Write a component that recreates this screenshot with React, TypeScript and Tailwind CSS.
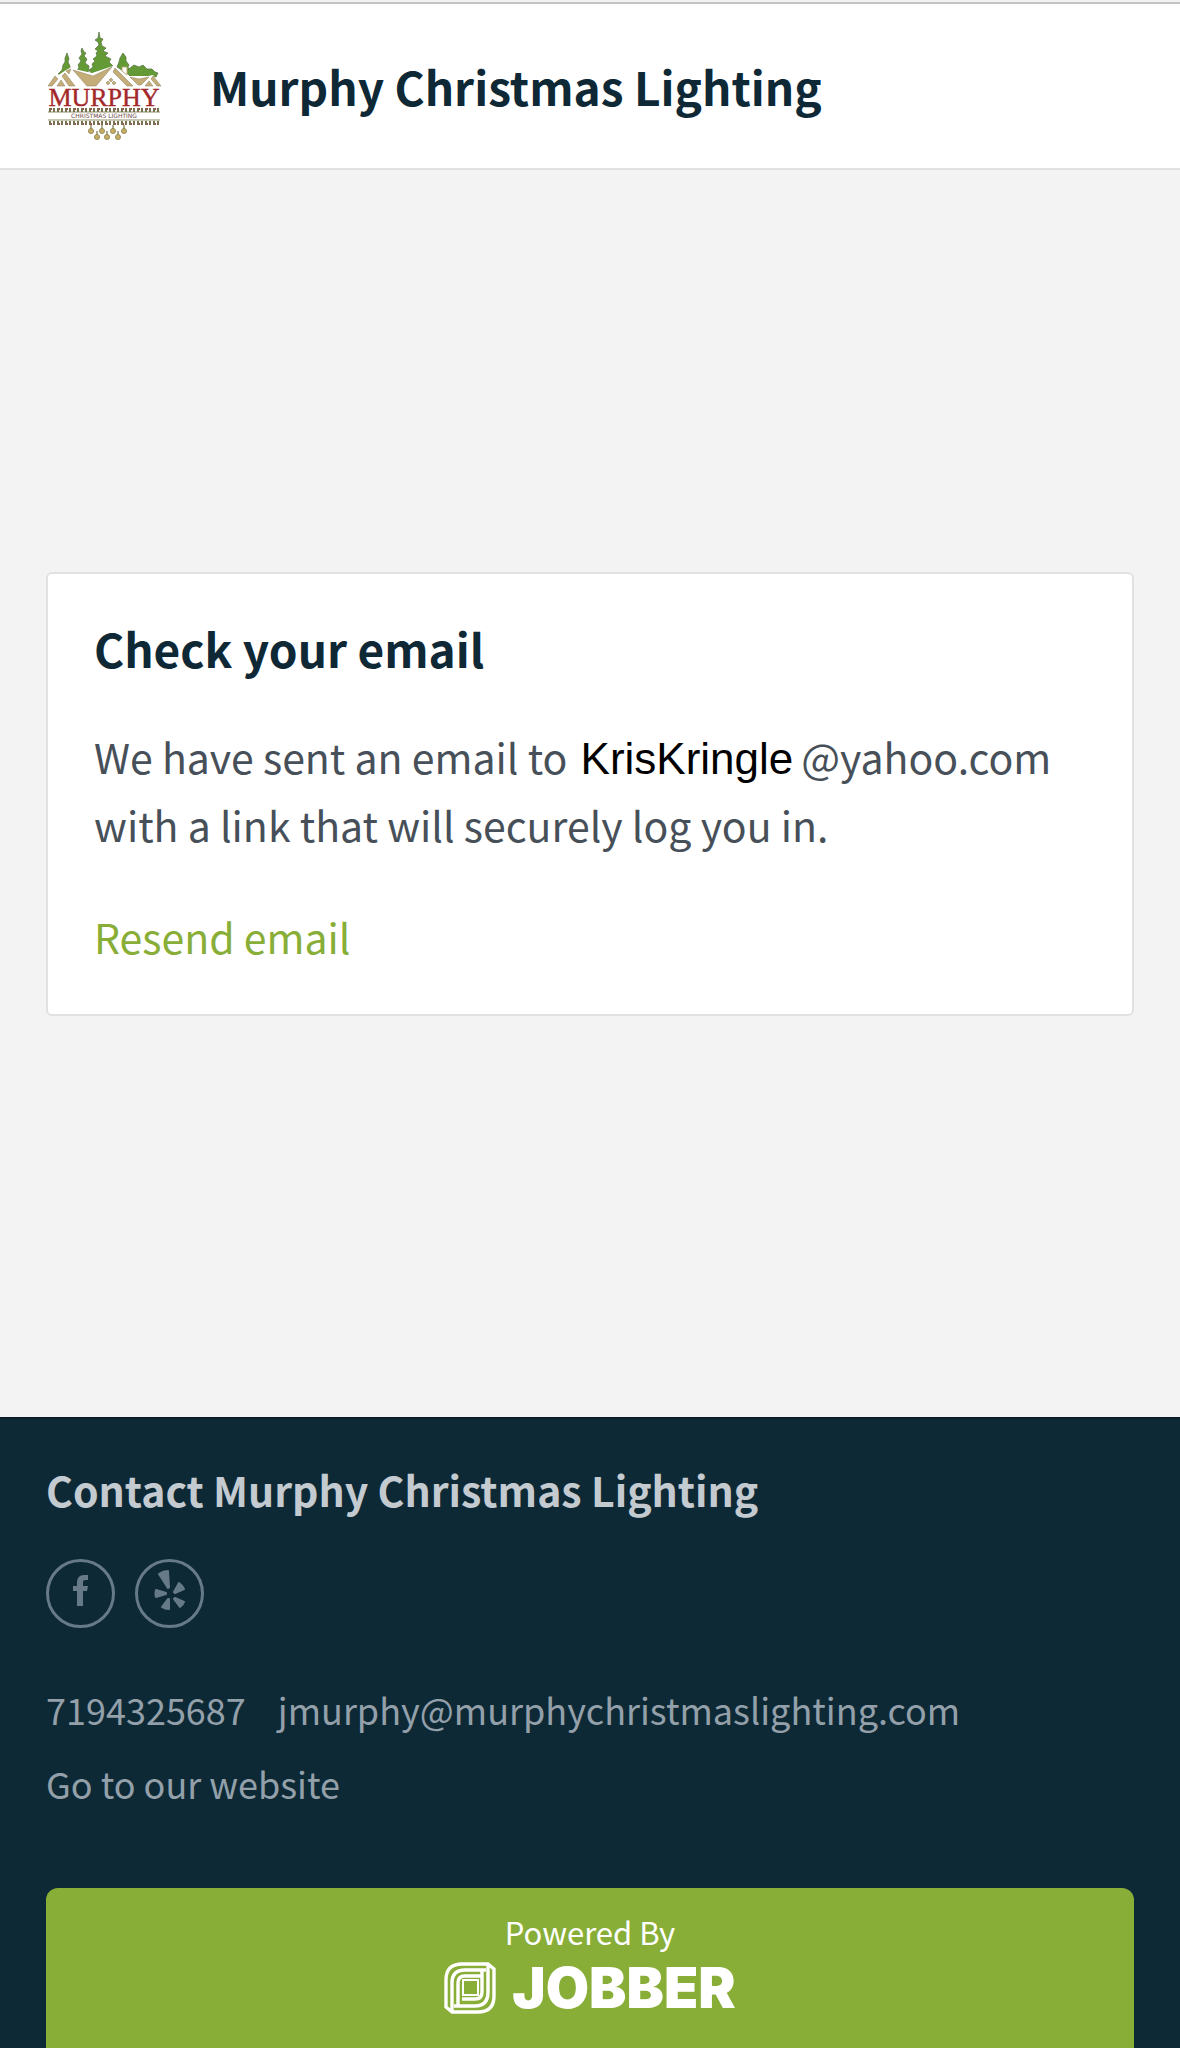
const company = {
  name: "Murphy Christmas Lighting",
  phone: "7194325687",
  email: "jmurphy@murphychristmaslighting.com",
};

const bulbs = [
  { x: 45, y: 100 },
  { x: 56, y: 100 },
  { x: 67, y: 100 },
  { x: 78, y: 100 },
  { x: 51, y: 106 },
  { x: 61, y: 106 },
  { x: 72, y: 106 },
];

function MurphyLogo() {
  return (
    <svg viewBox="0 0 116 110" className="h-[110px] w-[116px] shrink-0" role="img" aria-label="Murphy Christmas Lighting logo">
      {/* Trees */}
      <g fill="#649a35" stroke="#55703f" strokeWidth="0.7">
        <path d="M53 1l1 6 3 1-2 3 1 4 4 2-3 3 5 2-3 3 6 3-2 3 4 4-2 1 2 4-10 4-12-2-2-3 4-3-1-3 3-3-2-2 4-3-1-3 2-2-3-2 4-4-1-3-3-2 3-2z" />
        <path d="M36 17l2 4 2 1-2 3 3 3-2 4 4 3-1 8-11-3 2-4-1-2 3-4-2-3 3-4-1-3z" />
        <path d="M21 22l2 6-1 3 2 4-1 5-6 4-5-1 4-4 1-5 2-3 0-4z" />
        <path d="M77 22l3 4 0 4 3 4-1 2 2 4-7 0-6-4 2-5 1-4z" />
        <path d="M84 37l4-3 5 2 4-2 4 4 5 0 3 3 3 1-2 4-7-1-17 2-6-6z" />
      </g>
      {/* Roofs */}
      <path d="M2 56l9-11 9-6 4-2 22 5 21-7 16 10 19 0 5-1 9 12z" fill="#fff" />
      <path d="M76 36h5v8l-5-4z" fill="#fff" stroke="#bda873" strokeWidth="1" />
      <g fill="#c4ad78" stroke="#8b7c57" strokeWidth="0.5">
        <path d="M27 39l20 6 19-9-16 19h-9z" />
        <path d="M69 37l18 18h-6L67 41z" />
        <path d="M19 42l10 13h-6l-7-10z" />
        <path d="M20 40l5-2-2 5z" />
        <path d="M9 45l3 3-6 7H2z" />
        <path d="M84 46l9 2 10-2-8 8h-3z" />
        <path d="M107 45l8 10h-4l-6-7z" />
        <path d="M15 49l4 6h-8zM65 47l2 2-2 2-2-2zM62 50l2 2-2 2-2-2zM68 50l2 2-2 2-2-2zM103 50l4 5h-8z" />
      </g>
      <text x="58" y="75" textAnchor="middle" fontSize="26" fill="#a3282a" stroke="#a3282a" strokeWidth="0.4" className="font-['Liberation_Serif',serif]">
        MURPHY
      </text>
      {/* Strings of lights */}
      <g fill="none">
        <path d="M2 81h112M2 89h112" stroke="#8f8d66" strokeWidth="1" />
        <path d="M3 79h110M3 92h110" stroke="#77714f" strokeWidth="4" strokeDasharray="2 2" />
        <path d="M5 78h108M5 93h108" stroke="#a3483a" strokeWidth="2" strokeDasharray="1 7" />
      </g>
      <text x="58" y="87" textAnchor="middle" fontSize="6" fill="#6d4a48" className="font-['DejaVu_Sans',sans-serif]">
        CHRISTMAS LIGHTING
      </text>
      {bulbs.map((bulb) => (
        <g key={`${bulb.x}-${bulb.y}`}>
          <path d={`M${bulb.x} ${bulb.y - 6}v4`} stroke="#77704c" strokeWidth="1.2" />
          <circle cx={bulb.x} cy={bulb.y} r="2.6" fill="#c4ae66" stroke="#8a7b45" strokeWidth="0.7" />
        </g>
      ))}
    </svg>
  );
}

function FacebookIcon() {
  return (
    <svg viewBox="0 0 16 31" className="h-[31px] w-4" fill="currentColor" aria-hidden="true">
      <path d="M4 31V16H0v-5h4V8Q4 0 11 0h4v5h-3Q10 5 10 7v4h5l-1 5h-4v15z" />
    </svg>
  );
}

function YelpIcon() {
  return (
    <svg viewBox="0 0 32 41" className="h-[41px] w-8" fill="currentColor" stroke="currentColor" strokeWidth="2" strokeLinejoin="round" aria-hidden="true">
      <path d="M5 4Q9 1 14 1l1 16-1 1z" />
      <path d="M2 20q-1 4 0 7l10-3v-1z" />
      <path d="M15 29v10q-4 0-7-2l6-8z" />
      <path d="M21 28l9 4q-1 3-4 5l-6-8z" />
      <path d="M25 13q3 2 5 6l-9 4-1-1z" />
    </svg>
  );
}

function JobberMark() {
  return (
    <svg viewBox="0 0 52 52" className="size-[52px]" fill="none" stroke="#fff" strokeWidth="3.4" aria-hidden="true">
      <path d="M8 50L2 45V18Q2 2 18 2h26l6 5v27Q50 50 34 50H8z" />
      <path d="M8 49V21Q8 8 21 8h21" />
      <path d="M44 3v27Q44 44 31 44H10" />
      <path d="M14 44V21Q14 14 21 14h17" />
      <path d="M38 8v22Q38 37 31 37H18" />
      <path d="M19 33V18h15v15z" strokeWidth="2" />
    </svg>
  );
}

export default function App() {
  return (
    <div className="flex min-h-screen flex-col bg-[#f3f3f3] font-['Noto_Sans_CJK_SC',sans-serif] text-[#475059]">
      <header className="mt-[2px] flex items-center gap-12 border-t-2 border-b-2 border-t-[#c4c4c4] border-b-[#e1e1e1] bg-white px-[46px] py-[27px]">
        <MurphyLogo />
        <h1 className="text-[46px] leading-[60px] font-bold text-[#0e2836]">{company.name}</h1>
      </header>

      <main className="flex flex-1 flex-col justify-center px-[46px]">
        <section className="rounded-md border-2 border-[#e1e1e1] bg-white px-[46px] pt-11 pb-11">
          <h2 className="text-[46px] leading-[60px] font-bold text-[#0e2836]">Check your email</h2>
          <p className="mt-11 text-[41px] leading-[68px]">
            We have sent an email to{" "}
            <span className="mr-2 ml-1 font-['Liberation_Sans',sans-serif] text-[44px] leading-none text-black">KrisKringle</span>
            @yahoo.com with a link that will securely log you in.
          </p>
          <button type="button" className="mt-11 block text-[41px] leading-[68px] text-[#88ae37]">
            Resend email
          </button>
        </section>
      </main>

      <footer className="border-t-2 border-[#0a1c27] bg-[#0e2936] px-[46px] pt-9 text-[#93a0aa]">
        <h3 className="text-[41px] leading-[68px] font-bold text-[#c3cad0]">Contact {company.name}</h3>

        <div className="mt-9 flex gap-5">
          <a href="#facebook" aria-label="Facebook" className="flex size-[69px] items-center justify-center rounded-full border-3 border-[#667a87] pb-[6px] text-[#667a87]">
            <FacebookIcon />
          </a>
          <a href="#yelp" aria-label="Yelp" className="flex size-[69px] items-center justify-center rounded-full border-3 border-[#667a87] pb-[6px] text-[#667a87]">
            <YelpIcon />
          </a>
        </div>

        <div className="mt-11 flex flex-wrap gap-x-8 text-[36px] leading-[74px]">
          <a href="tel:7194325687">{company.phone}</a>
          <a href="mailto:jmurphy@murphychristmaslighting.com">{company.email}</a>
          <a href="#website" className="basis-full">Go to our website</a>
        </div>

        <a href="#jobber" className="mt-[68px] flex flex-col items-center rounded-t-xl bg-[#88ae37] pt-5 pb-8 text-white">
          <span className="text-[31px] leading-[48px]">Powered By</span>
          <span className="mt-1 flex items-center gap-4">
            <JobberMark />
            <span className="font-['Inter',sans-serif] text-[56px] leading-[56px] font-black">JOBBER</span>
          </span>
        </a>
      </footer>
    </div>
  );
}
